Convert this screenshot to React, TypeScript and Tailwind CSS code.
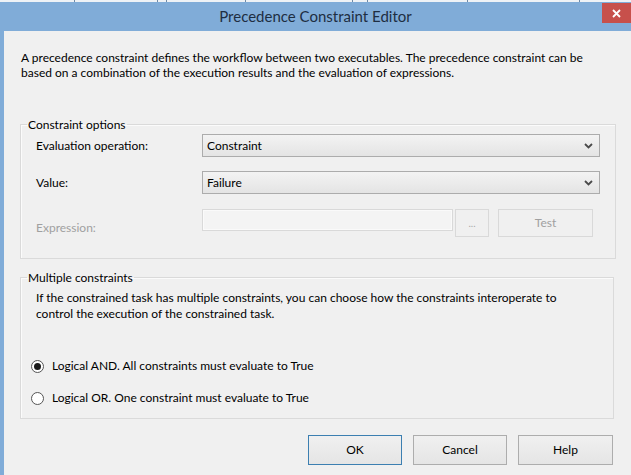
import React from "react"

const ticks = [74, 157, 166, 245, 352, 367, 467, 579]

function Combo({ value }: { value: string }) {
  return (
    <div className="flex h-[23px] w-[398px] items-center justify-between border border-[#acacac] bg-linear-to-b from-[#f3f3f3] to-[#e4e4e4] pl-[4px] pr-[6px]">
      <span>{value}</span>
      <svg width="9" height="6" viewBox="0 0 9 6">
        <path d="M1 1l3.5 3.5L8 1" stroke="#4a4a4a" strokeWidth="1.8" fill="none" />
      </svg>
    </div>
  )
}

function Radio({ checked, label }: { checked?: boolean; label: string }) {
  return (
    <div className="flex h-[16px] items-center">
      <div className="flex h-[13px] w-[13px] items-center justify-center rounded-full border border-[#555] bg-white">
        {checked && <div className="h-[7px] w-[7px] rounded-full bg-[#1a1a1a]" />}
      </div>
      <span className="ml-[8px]">{label}</span>
    </div>
  )
}

function Button({ label, focused, w }: { label: string; focused?: boolean; w: string }) {
  return (
    <button
      className={
        "h-[30px] border bg-linear-to-b from-[#f0f0f0] to-[#e5e5e5] text-black " +
        w +
        (focused ? " border-[#3c7fb1]" : " border-[#adadad]")
      }
    >
      {label}
    </button>
  )
}

export default function App() {
  return (
    <div className="relative h-[475px] w-[631px] overflow-hidden bg-[#80acd8] font-['Lato',sans-serif] text-[12px] text-black">
      {/* window behind */}
      <div className="relative h-[2px] bg-[#eef2f6]">
        {ticks.map((x) => (
          <div key={x} className="absolute top-0 h-[2px] w-px bg-[#6f8aa6]" style={{ left: x }} />
        ))}
      </div>

      {/* title bar */}
      <div className="relative flex h-[29px] items-center justify-center">
        <span className="text-[15px] text-[#1e2e42]">Precedence Constraint Editor</span>
        <div className="absolute right-0 top-[1px] flex h-[20px] w-[29px] items-center justify-center bg-[#c7504b]">
          <svg width="9" height="9" viewBox="0 0 9 9">
            <path d="M1 1l7 7M8 1L1 8" stroke="#fff" strokeWidth="1.8" />
          </svg>
        </div>
      </div>

      {/* client area */}
      <div className="ml-[4px] h-[444px] bg-[#f0f0f0]">
        <p className="ml-[17px] pt-[19px] leading-[15px] whitespace-nowrap">
          A precedence constraint defines the workflow between two executables. The precedence constraint can be
          <br />
          based on a combination of the execution results and the evaluation of expressions.
        </p>

        <fieldset className="ml-[16px] mt-[37px] w-[594px] border border-[#dadada] px-[15px] pb-[21px] pt-[2px] shadow-[inset_1px_1px_0_#fbfbfb]">
          <legend className="ml-[-9px] px-[1px] leading-[15px]">Constraint options</legend>
          <div className="flex items-center">
            <span className="w-[166px]">Evaluation operation:</span>
            <Combo value="Constraint" />
          </div>
          <div className="mt-[14px] flex items-center">
            <span className="w-[166px]">Value:</span>
            <Combo value="Failure" />
          </div>
          <div className="mt-[15px] flex h-[28px] items-start">
            <span className="mt-[11px] w-[166px] leading-[15px] text-[#a0a0a0]">Expression:</span>
            <div className="h-[22px] w-[251px] border border-[#d9d9d9] bg-[#f4f4f4] shadow-[inset_0_0_0_1px_#fafafa]" />
            <div className="ml-[2px] flex h-[28px] w-[34px] items-center justify-center border border-[#d9d9d9] text-[10px] text-[#a8a8a8]">
              ...
            </div>
            <div className="ml-[9px] flex h-[28px] w-[95px] items-center justify-center border border-[#d9d9d9] text-[#a0a0a0]">
              Test
            </div>
          </div>
        </fieldset>

        <fieldset className="ml-[16px] mt-[11px] w-[594px] border border-[#dadada] pb-[12px] pl-[15px] pt-[5px] shadow-[inset_1px_1px_0_#fbfbfb]">
          <legend className="ml-[-9px] px-[1px] leading-[15px]">Multiple constraints</legend>
          <p className="leading-[16px] whitespace-nowrap">
            If the constrained task has multiple constraints, you can choose how the constraints interoperate to
            <br />
            control the execution of the constrained task.
          </p>
          <div className="ml-[-5px] mt-[36px] flex flex-col gap-[16px]">
            <Radio checked label="Logical AND. All constraints must evaluate to True" />
            <Radio label="Logical OR. One constraint must evaluate to True" />
          </div>
        </fieldset>

        <div className="mt-[16px] flex w-[609px] justify-end gap-[11px]">
          <Button label="OK" focused w="w-[94px]" />
          <Button label="Cancel" w="w-[94px]" />
          <Button label="Help" w="w-[95px]" />
        </div>
      </div>
    </div>
  )
}
